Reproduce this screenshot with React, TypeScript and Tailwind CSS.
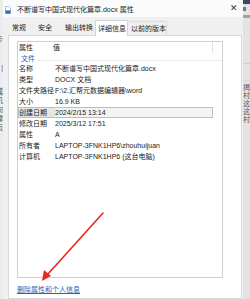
import React from "react";

const font = "font-['Liberation_Sans','Noto_Sans_CJK_SC',sans-serif]";

const rows: [string, string][] = [
  ["名称", "不断谱写中国式现代化篇章.docx"],
  ["类型", "DOCX 文档"],
  ["文件夹路径", "F:\\2.汇帮元数据编辑器\\word"],
  ["大小", "16.9 KB"],
  ["创建日期", "2024/2/15 13:14"],
  ["修改日期", "2025/3/12 17:51"],
  ["属性", "A"],
  ["所有者", "LAPTOP-3FNK1HP6\\zhouhuijuan"],
  ["计算机", "LAPTOP-3FNK1HP6 (这台电脑)"],
];

function DocIcon() {
  return (
    <svg width="6" height="8" viewBox="0 0 6 8">
      <path d="M0.5 0.5h3.5l1.5 1.5v5.5h-5z" fill="#fff" stroke="#8aa6cf" strokeWidth="0.7" />
      <rect x="0.5" y="4.5" width="5" height="3" fill="#2b63c6" />
    </svg>
  );
}

function Arrow() {
  return (
    <svg className="pointer-events-none absolute left-0 top-0" width="250" height="299">
      <line x1="103" y1="213" x2="48" y2="274" stroke="#e8281e" strokeWidth="1.6" strokeLinecap="round" />
      <path d="M42 281 L44 270 L51 276 Z" fill="#e8281e" />
    </svg>
  );
}

export default function App() {
  return (
    <div className={`relative flex h-[299px] w-[250px] overflow-hidden bg-[#e8e8e8] text-[7px] leading-[11px] text-[#1b1b1b] ${font}`}>
      {/* window behind, left edge */}
      <div className="relative w-[3px] shrink-0 overflow-hidden bg-[#ececec] text-[#555]">
        <div className="absolute right-0 top-[35px] flex flex-col items-end leading-[9px]">
          <span>步</span>
          <span className="mt-[19px]">|</span>
          <span className="mt-[15px] bg-[#d6d6d6]">属</span>
          <span>机</span>
          <span>向</span>
          <span>绿</span>
          <span>页</span>
        </div>
      </div>

      {/* dialog */}
      <div className="flex w-[240px] shrink-0 flex-col">
        <div className="flex h-[17px] shrink-0 items-center bg-[#fbfbfb] pl-[2px] pr-[4px]">
          <div className="mt-[3px]">
            <DocIcon />
          </div>
          <span className="ml-[6px] mt-[2px] text-[#222]">不断谱写中国式现代化篇章.docx 属性</span>
          <span className="ml-auto mr-[1px] text-[9px] font-light text-[#333]">✕</span>
        </div>

        <div className="flex flex-1 flex-col bg-[#f0f0f0] pl-[5px] pr-[1px]">
          <div className="flex h-[18px] shrink-0 items-end text-[#222]">
            <div className="h-[14px] w-[26px] pl-[4px] leading-[14px]">常规</div>
            <div className="h-[14px] w-[27px] pl-[4px] leading-[14px]">安全</div>
            <div className="h-[14px] w-[34px] pl-[4px] leading-[14px]">输出转换</div>
            <div className="relative z-10 -mb-px h-[16px] w-[33px] border border-b-0 border-[#d4d4d4] bg-white pl-[2px] leading-[15px]">详细信息</div>
            <div className="h-[14px] w-[39px] border-r border-t border-[#dcdcdc] pl-[3px] leading-[13px]">以前的版本</div>
          </div>

          <div className="flex flex-1 flex-col border border-[#d9d9d9] bg-white pl-[8px] pt-[5px]">
            <div className="flex h-[237px] w-[206px] flex-col border border-[#cfcfcf] bg-white">
              <div className="flex h-[11px] shrink-0">
                <div className="w-[34px] pl-[1px]">属性</div>
                <div className="w-[160px] pl-[1px]">值</div>
                <div className="flex-1 border-l border-[#e2e2e2]" />
              </div>
              <div className="flex h-[10px] shrink-0 items-center pl-[3px] text-[#2f66c0]">
                <span>文件</span>
                <div className="ml-[3px] mt-[5px] h-px flex-1 bg-[#ececec]" />
              </div>
              {rows.map(([k, v]) => (
                <div
                  key={k}
                  className={`flex h-[11px] w-[195px] shrink-0 items-center ${k === "创建日期" ? "border border-[#bdbdbd] bg-[#f3f3f3]" : "border border-transparent"}`}
                >
                  <div className={`h-full w-[36px] whitespace-nowrap leading-[9px] ${k === "创建日期" ? "bg-[#e6e6e6]" : ""}`}>{k}</div>
                  <div className="flex-1 whitespace-nowrap leading-[9px]">{v}</div>
                </div>
              ))}
            </div>
            <div className="mt-[6px] text-[#2a62b8] underline">删除属性和个人信息</div>
          </div>
        </div>
      </div>

      {/* window behind, right edge */}
      <div className="relative flex-1 overflow-hidden bg-[#e3e3e3] text-[#555]">
        <div className="h-[4px] bg-[#3b4a66]" />
        <div className="mt-[3px] h-[4px] w-[3px] bg-[#6a7791]" />
        <div className="mt-[4px] h-[3px] bg-[#9aa3b3]" />
        <div className="mt-[45px] h-px bg-[#cfcfcf]" />
        <div className="mt-[16px] h-px bg-[#d5d5d5]" />
        <div className="absolute left-0 top-[84px] flex flex-col leading-[8px]">
          <span>揭</span>
          <span>村</span>
          <span>这</span>
          <span>这</span>
          <span>村</span>
        </div>
      </div>

      <Arrow />
    </div>
  );
}
